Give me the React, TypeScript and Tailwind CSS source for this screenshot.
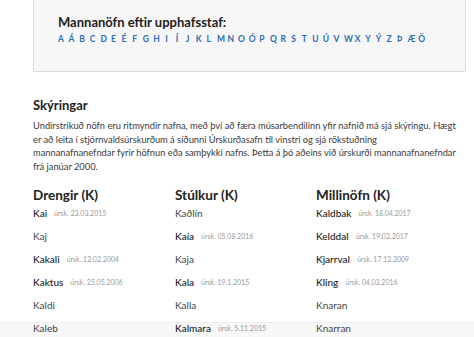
import React from 'react';

const letters = ['A', 'Á', 'B', 'C', 'D', 'E', 'É', 'F', 'G', 'H', 'I', 'Í', 'J', 'K', 'L', 'M', 'N', 'O', 'Ó', 'P', 'Q', 'R', 'S', 'T', 'U', 'Ú', 'V', 'W', 'X', 'Y', 'Ý', 'Z', 'Þ', 'Æ', 'Ö'];

interface NameRow {
  name: string;
  date?: string;
}

const columns: { title: string; rows: NameRow[] }[] = [
  {
    title: 'Drengir (K)',
    rows: [
      { name: 'Kai', date: 'úrsk. 23.03.2015' },
      { name: 'Kaj' },
      { name: 'Kakali', date: 'úrsk. 12.02.2004' },
      { name: 'Kaktus', date: 'úrsk. 25.05.2006' },
      { name: 'Kaldi' },
      { name: 'Kaleb' },
    ],
  },
  {
    title: 'Stúlkur (K)',
    rows: [
      { name: 'Kaðlín' },
      { name: 'Kaía', date: 'úrsk. 05.08.2016' },
      { name: 'Kaja' },
      { name: 'Kala', date: 'úrsk. 19.1.2015' },
      { name: 'Kalla' },
      { name: 'Kalmara', date: 'úrsk. 5.11.2015' },
    ],
  },
  {
    title: 'Millinöfn (K)',
    rows: [
      { name: 'Kaldbak', date: 'úrsk. 18.04.2017' },
      { name: 'Kelddal', date: 'úrsk. 19.02.2017' },
      { name: 'Kjarrval', date: 'úrsk. 17.12.2009' },
      { name: 'Kling', date: 'úrsk. 04.03.2016' },
      { name: 'Knaran' },
      { name: 'Knarran' },
    ],
  },
];

const App: React.FC = () => {
  return (
    <div
      className="relative w-[474px] h-[337px] overflow-hidden bg-white text-[#333]"
      style={{ fontFamily: 'Lato, "Open Sans", sans-serif' }}
    >
      {/* faint band behind the last row */}
      <div className="absolute left-0 right-0 top-[322px] bottom-0 bg-[#f7f7f7] border-t border-[#efefef]" />

      <div className="relative">
        {/* letter index box */}
        <div className="ml-[33px] w-[433px] h-[72px] bg-[#f6f6f6] border border-t-0 border-[#dcdcdc] pl-[24px] pt-[14px]">
          <h2 className="text-[13px] leading-[17px] font-bold text-[#222]">Mannanöfn eftir upphafsstaf:</h2>
          <div className="flex gap-[5.6px] mt-[3px] text-[8.5px] leading-[10px] font-bold text-[#2d6db4]">
            {letters.map(l => (
              <a key={l} className="w-[5px] text-center">{l}</a>
            ))}
          </div>
        </div>

        {/* explanation */}
        <div className="pl-[33px] pr-[8px] mt-[25px]">
          <h2 className="text-[13px] leading-[16px] font-bold text-[#222]">Skýringar</h2>
          <p className="mt-[6px] text-[9.3px] leading-[13.5px] text-[#3a3a3a]">
            Undirstrikuð nöfn eru ritmyndir nafna, með því að færa músarbendilinn yfir nafnið má sjá skýringu. Hægt
            <br />
            er að leita í stjórnvaldsúrskurðum á síðunni Úrskurðasafn til vinstri og sjá rökstuðning
            <br />
            mannanafnanefndar fyrir höfnun eða samþykki nafns. Þetta á þó aðeins við úrskurði mannanafnanefndar
            <br />
            frá janúar 2000.
          </p>
        </div>

        {/* name columns */}
        <div className="grid grid-cols-[142px_141px_141px] pl-[33px] mt-[15px]">
          {columns.map(col => (
            <div key={col.title}>
              <h3 className="text-[13.5px] leading-[14px] font-bold text-[#222]">{col.title}</h3>
              <div>
                {col.rows.map(row => (
                  <div key={row.name} className="flex items-center h-[23px]">
                    <span
                      className={
                        row.date
                          ? 'text-[10px] font-medium text-[#222]'
                          : 'text-[10px] text-[#444]'
                      }
                    >
                      {row.name}
                    </span>
                    {row.date && <span className="ml-[7px] text-[7px] text-[#9a9a9a]">{row.date}</span>}
                  </div>
                ))}
              </div>
            </div>
          ))}
        </div>
      </div>
    </div>
  );
};

export default App;
